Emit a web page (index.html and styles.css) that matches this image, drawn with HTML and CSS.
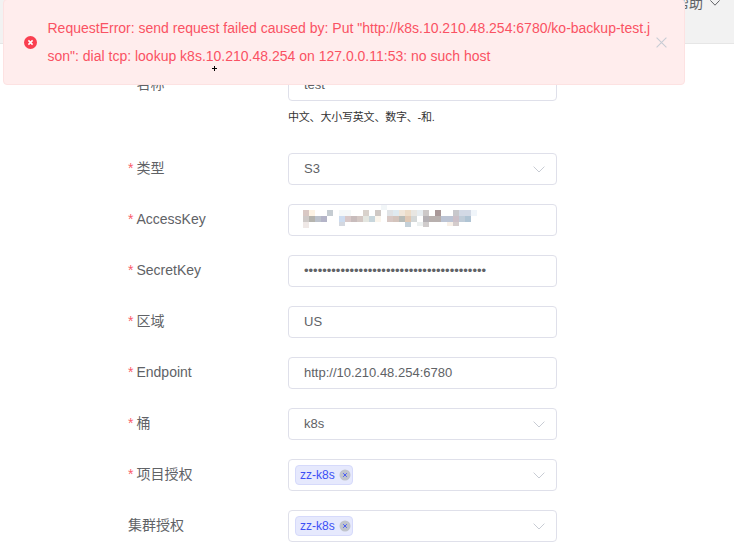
FILE: index.html
```html
<!DOCTYPE html>
<html lang="zh-CN">
<head>
<meta charset="utf-8">
<title>备份账号</title>
<link rel="stylesheet" href="styles.css">
</head>
<body>
<header class="topbar">
  <span class="help">帮助</span>
  <svg class="help-chevron" width="10" height="6" viewBox="0 0 10 6"><path d="M.4.4 5 5.2 9.6.4" fill="none" stroke="#606266" stroke-width="1"/></svg>
</header>

<div class="alert" role="alert">
  <svg class="alert-icon" width="13" height="13" viewBox="0 0 13 13"><circle cx="6.5" cy="6.5" r="6.5" fill="#fa3f50"/><path d="M4.4 4.4 8.6 8.6M8.6 4.4 4.4 8.6" stroke="#fff" stroke-width="1.5" fill="none"/></svg>
  <p class="alert-text">RequestError: send request failed caused by: Put "http://k8s.10.210.48.254:6780/ko-backup-test.json": dial tcp: lookup k8s.10.210.48.254 on 127.0.0.11:53: no such host</p>
  <svg class="alert-close" width="11" height="11" viewBox="0 0 11 11"><path d="M.6.6 10.4 10.4M10.4.6.6 10.4" stroke="#c8ccd4" stroke-width="1.1" fill="none"/></svg>
</div>

<svg class="cursor" width="5" height="5" viewBox="0 0 5 5"><path d="M2 0h1v2h2v1H3v2H2V3H0V2h2z" fill="#000"/></svg>

<form class="form">
  <div class="row with-help">
    <label class="label"><span class="req">*</span>名称</label>
    <div class="control">
      <input class="field" value="test">
      <div class="hint">中文、大小写英文、数字、-和.</div>
    </div>
  </div>
  <div class="row">
    <label class="label"><span class="req">*</span>类型</label>
    <div class="control"><div class="field select"><span class="value">S3</span><svg class="chevron" width="12" height="7" viewBox="0 0 12 7"><path d="M.6.6 6 6 11.4.6" fill="none" stroke="#c8ccd4" stroke-width="1"/></svg></div></div>
  </div>
  <div class="row">
    <label class="label"><span class="req">*</span>AccessKey</label>
    <div class="control">
      <input class="field" value="">
      <svg class="mosaic" width="192" height="24" viewBox="0 0 192 24" shape-rendering="crispEdges">
        <rect x="0" y="5" width="6" height="6" fill="#d9c8c4"/><rect x="6" y="5" width="6" height="6" fill="#fdf3e4"/><rect x="24" y="5" width="6" height="6" fill="#c5ccd2"/><rect x="36" y="5" width="12" height="6" fill="#f4f8f9"/><rect x="60" y="5" width="6" height="6" fill="#d9d2cc"/><rect x="72" y="5" width="6" height="6" fill="#cfc8c4"/><rect x="78" y="0" width="6" height="5" fill="#f2f6f8"/><rect x="84" y="5" width="6" height="6" fill="#e0e3e6"/><rect x="90" y="5" width="6" height="6" fill="#dfeaf0"/><rect x="96" y="5" width="6" height="6" fill="#f0e6da"/><rect x="102" y="5" width="6" height="6" fill="#ecdcc8"/><rect x="108" y="5" width="6" height="6" fill="#e8e6e2"/><rect x="114" y="5" width="6" height="6" fill="#e6ecf0"/><rect x="120" y="5" width="6" height="6" fill="#ccc8c8"/><rect x="132" y="5" width="6" height="6" fill="#a99898"/><rect x="150" y="5" width="6" height="6" fill="#c8c8cc"/><rect x="156" y="5" width="12" height="6" fill="#d3d9e5"/><rect x="168" y="5" width="6" height="6" fill="#f0f5fa"/>
        <rect x="0" y="11" width="6" height="6" fill="#cfcac8"/><rect x="6" y="11" width="6" height="6" fill="#b5b4ae"/><rect x="12" y="11" width="6" height="6" fill="#bcc2cc"/><rect x="18" y="11" width="6" height="6" fill="#b4b4c8"/><rect x="36" y="11" width="6" height="6" fill="#cddcf0"/><rect x="42" y="11" width="6" height="6" fill="#d8c8c8"/><rect x="48" y="11" width="6" height="6" fill="#c8bcbc"/><rect x="54" y="11" width="6" height="6" fill="#d4c8c4"/><rect x="60" y="11" width="6" height="6" fill="#e4e6e0"/><rect x="66" y="11" width="6" height="6" fill="#c8d6dc"/><rect x="72" y="11" width="6" height="6" fill="#fbf5ec"/><rect x="84" y="11" width="6" height="6" fill="#d8c8c4"/><rect x="90" y="11" width="6" height="6" fill="#d4c4bc"/><rect x="96" y="11" width="6" height="6" fill="#b8bcb8"/><rect x="102" y="11" width="6" height="6" fill="#e0c8b4"/><rect x="108" y="11" width="6" height="6" fill="#d4d8d8"/><rect x="120" y="11" width="6" height="6" fill="#b4b0b4"/><rect x="126" y="11" width="12" height="6" fill="#b8b0ae"/><rect x="138" y="11" width="12" height="6" fill="#bcc4d4"/><rect x="150" y="11" width="6" height="6" fill="#ccc0c8"/><rect x="156" y="11" width="6" height="6" fill="#c0ccd8"/><rect x="162" y="11" width="6" height="6" fill="#b0c4d4"/>
        <rect x="0" y="17" width="6" height="6" fill="#efe8e6"/><rect x="36" y="17" width="6" height="4" fill="#d4d8e0"/><rect x="102" y="17" width="6" height="5" fill="#c4d0d8"/><rect x="114" y="17" width="6" height="4" fill="#ecf0f0"/><rect x="120" y="17" width="6" height="5" fill="#d0cccc"/><rect x="144" y="17" width="6" height="4" fill="#f8f0e8"/><rect x="150" y="17" width="6" height="4" fill="#d4cccc"/>
      </svg>
    </div>
  </div>
  <div class="row">
    <label class="label"><span class="req">*</span>SecretKey</label>
    <div class="control"><input class="field secret" type="password" value="aaaaaaaaaaaaaaaaaaaaaaaaaaaaaaaaaaaaaaaa"></div>
  </div>
  <div class="row">
    <label class="label"><span class="req">*</span>区域</label>
    <div class="control"><input class="field" value="US"></div>
  </div>
  <div class="row">
    <label class="label"><span class="req">*</span>Endpoint</label>
    <div class="control"><input class="field" value="http://10.210.48.254:6780"></div>
  </div>
  <div class="row">
    <label class="label"><span class="req">*</span>桶</label>
    <div class="control"><div class="field select"><span class="value">k8s</span><svg class="chevron" width="12" height="7" viewBox="0 0 12 7"><path d="M.6.6 6 6 11.4.6" fill="none" stroke="#c8ccd4" stroke-width="1"/></svg></div></div>
  </div>
  <div class="row">
    <label class="label"><span class="req">*</span>项目授权</label>
    <div class="control"><div class="field select multi"><span class="tag">zz-k8s<svg class="tag-x" width="12" height="12" viewBox="0 0 12 12"><circle cx="6" cy="6" r="5.5" fill="#c0c4cc"/><path d="M4.2 4.2 7.8 7.8M7.8 4.2 4.2 7.8" stroke="#3d50f5" stroke-width=".9" fill="none"/></svg></span><svg class="chevron" width="12" height="7" viewBox="0 0 12 7"><path d="M.6.6 6 6 11.4.6" fill="none" stroke="#c8ccd4" stroke-width="1"/></svg></div></div>
  </div>
  <div class="row">
    <label class="label">集群授权</label>
    <div class="control"><div class="field select multi"><span class="tag">zz-k8s<svg class="tag-x" width="12" height="12" viewBox="0 0 12 12"><circle cx="6" cy="6" r="5.5" fill="#c0c4cc"/><path d="M4.2 4.2 7.8 7.8M7.8 4.2 4.2 7.8" stroke="#3d50f5" stroke-width=".9" fill="none"/></svg></span><svg class="chevron" width="12" height="7" viewBox="0 0 12 7"><path d="M.6.6 6 6 11.4.6" fill="none" stroke="#c8ccd4" stroke-width="1"/></svg></div></div>
  </div>
</form>
</body>
</html>
```

FILE: styles.css
```css
* { box-sizing: border-box; }
html, body { margin: 0; height: 100%; overflow: hidden; background: #fff; }
body {
  font-family: "Liberation Sans", "Noto Sans CJK SC", sans-serif;
  font-size: 14px;
  color: #606266;
  position: relative;
}

.topbar {
  height: 44px;
  background: #f2f2f2;
  border-bottom: 1px solid #e6e6e6;
  display: flex;
  justify-content: flex-end;
  align-items: flex-start;
  padding-right: 14px;
  gap: 7px;
}
.help { font-size: 14px; line-height: 14px; margin-top: -4px; }
.help-chevron { margin-top: 0; }

.alert {
  position: absolute;
  z-index: 5;
  left: 3px;
  top: -1px;
  width: 682px;
  height: 86px;
  background: #ffeded;
  border: 1px solid #fde2e2;
  border-radius: 4px;
  display: flex;
  align-items: center;
  padding-left: 20px;
}
.alert-icon { flex: none; }
.alert-text {
  margin: 0 0 0 10.5px;
  width: 605px;
  font-size: 14px;
  line-height: 28px;
  color: #fa5263;
  word-break: break-all;
}
.alert-close { position: absolute; right: 17px; top: 36.5px; }

.cursor { position: absolute; z-index: 6; left: 212px; top: 66px; }

.form { padding: 25px 0 0 128px; }
.row { display: flex; margin-bottom: 19px; }
.label { width: 160px; flex: none; line-height: 30px; color: #606266; }
.req { color: #fa5d6a; margin-right: 3px; }
.control { width: 269px; position: relative; }

.field {
  display: flex;
  align-items: center;
  width: 100%;
  height: 32px;
  padding: 0 15px 2px;
  background: #fff;
  border: 1px solid #dfe0ea;
  border-radius: 4px;
  font-family: inherit;
  font-size: 13px;
  color: #606266;
  outline: none;
}
.select { justify-content: space-between; padding: 0 11px 0 15px; }
.value { margin-bottom: 2px; }
.multi { padding-left: 6px; }
.secret { font-size: 13px; letter-spacing: 0; }
.hint { font-size: 11px; line-height: 33px; color: #333; height: 33px; letter-spacing: -.2px; }

.chevron { flex: none; }
.mosaic { position: absolute; left: 15px; top: 1px; pointer-events: none; }

.tag {
  display: inline-flex;
  align-items: center;
  height: 20px;
  padding: 0 1px 1px 4px;
  gap: 4px;
  background: #e6e9fd;
  border: 1px solid #d6dafb;
  border-radius: 4px;
  font-size: 12px;
  color: #3d50f5;
}
.tag-x { flex: none; margin-top: 1px; }
```
